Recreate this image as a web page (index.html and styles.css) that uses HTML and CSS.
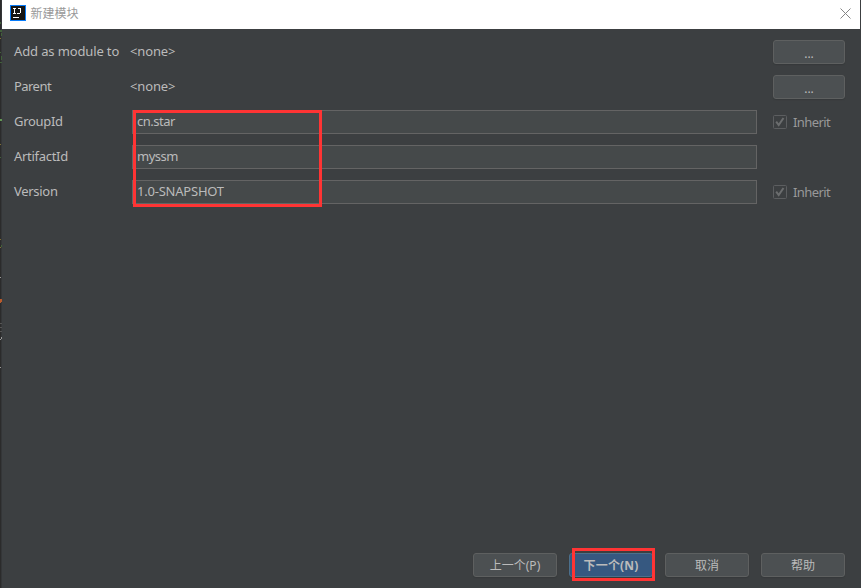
FILE: index.html
```html
<!DOCTYPE html>
<html lang="zh">
<head>
<meta charset="utf-8">
<title>新建模块</title>
<link rel="stylesheet" href="styles.css">
</head>
<body>
<div class="screen">
  <svg class="backdrop" width="2" height="588" viewBox="0 0 2 588" shape-rendering="crispEdges">
    <path fill="#2b2b2b" d="M0 0h1v588H0z"/>
    <path fill="#343638" d="M1 0h1v588H1z"/>
    <path fill="#41603a" d="M0 22h1v2H0zM0 30h2v2H0zM1 33h1v3H1zM0 52h1v1H0zM1 56h1v4H1zM0 62h2v1H0zM0 157h1v1H0zM1 245h1v2H1z"/>
    <path fill="#629755" d="M0 119h2v2H0z"/>
    <path fill="#7d6d35" d="M0 38h1v1H0zM0 144h1v1H0zM0 239h1v1H0zM0 247h1v1H0z"/>
    <path fill="#b95a2b" d="M0 299h2v3H0zM0 302h1v1H0z"/>
    <path fill="#999" d="M0 277h1v1H0zM1 337h1v2H1zM0 339h1v1H0zM0 367h1v1H0z"/>
    <path fill="#555" d="M0 323h2v1H0zM0 327h2v1H0zM0 331h2v1H0z"/>
  </svg>
  <main class="dialog">
    <header class="titlebar">
      <svg class="logo" width="16" height="16" viewBox="0 0 16 16" shape-rendering="crispEdges">
        <path fill="#087cfa" d="M0 0h16v16H0z"/>
        <path fill="#151515" d="M1 1h14v14H1z"/>
        <path fill="#fff" d="M3 3h3v1H3zM4 4h1v4H4zM3 8h3v1H3zM8 3h3v1H8zM10 4h1v4h-1zM7 8h3v1H7zM3 12h6v1H3z"/>
      </svg>
      <h1 class="title">新建模块</h1>
      <svg class="close" width="11" height="11" viewBox="0 0 11 11"><path d="M.5.5l10 10M10.500.5l-10 10" stroke="#858585" fill="none"/></svg>
    </header>
    <section class="form">
      <span class="label wide">Add as module to</span><span class="value">&lt;none&gt;</span><button class="btn more">...</button>
      <span class="label parent">Parent</span><span class="value">&lt;none&gt;</span><button class="btn more">...</button>
      <span class="label">GroupId</span><span class="field">cn.star</span>
      <span class="inherit"><svg width="14" height="14" viewBox="0 0 14 14"><rect x=".5" y=".5" width="13" height="13" rx="1" fill="none" stroke="#5c5e60"/><path d="M3.200 6.700l2.500 3.300 4.800-7" fill="none" stroke="#6b6d6e" stroke-width="2"/></svg>Inherit</span>
      <span class="label">ArtifactId</span><span class="field">myssm</span><span></span>
      <span class="label">Version</span><span class="field snapshot">1.0-SNAPSHOT</span>
      <span class="inherit"><svg width="14" height="14" viewBox="0 0 14 14"><rect x=".5" y=".5" width="13" height="13" rx="1" fill="none" stroke="#5c5e60"/><path d="M3.200 6.700l2.500 3.300 4.800-7" fill="none" stroke="#6b6d6e" stroke-width="2"/></svg>Inherit</span>
      <i class="mark mark-fields"></i>
    </section>
    <footer class="actions">
      <button class="btn">上一个(P)</button>
      <span class="primary-wrap"><button class="btn primary">下一个(N)</button><i class="mark mark-next"></i></span>
      <button class="btn">取消</button>
      <button class="btn">帮助</button>
    </footer>
  </main>
</div>
</body>
</html>
```

FILE: styles.css
```css
* { box-sizing: border-box; }
body { margin: 0; background: #3c3f41; }
.screen {
  display: flex;
  width: 861px;
  height: 588px;
  overflow: hidden;
  font: 13px/24px "Noto Sans", "Noto Sans CJK SC", sans-serif;
  color: #bbb;
}
.backdrop { flex: none; }
.dialog {
  flex: 1;
  display: flex;
  flex-direction: column;
  background: #3c3f41;
}
.titlebar {
  display: flex;
  align-items: center;
  height: 29px;
  margin-right: 1px;
  padding: 0 9px 3px 8px;
  background: #fff;
}
.title {
  flex: 1;
  margin: 0 0 0 4.500px;
  font: 12px/20px "Noto Sans CJK SC", sans-serif;
  color: #999;
}
.form {
  position: relative;
  display: grid;
  grid-template-columns: 118px 625px 88px;
  grid-auto-rows: 24px;
  row-gap: 11px;
  padding: 11px 0 0 12px;
}
.form > * { white-space: nowrap; }
.label { line-height: 23px; letter-spacing: -0.300px; }
.wide { letter-spacing: -0.130px; }
.parent { letter-spacing: -0.550px; }
.value { margin-left: -2px; line-height: 23px; letter-spacing: -0.150px; }
.field {
  padding-left: 4px;
  line-height: 21px;
  letter-spacing: -0.500px;
  background: #45494a;
  border: 1px solid #646464;
}
.snapshot { letter-spacing: -0.220px; }
.form .btn, .inherit { margin-left: 16px; }
.inherit {
  display: flex;
  align-items: center;
  gap: 6px;
  color: #999;
  letter-spacing: -0.600px;
}
.btn {
  display: block;
  width: 84px;
  height: 24px;
  padding: 1px 0 0;
  font: 12px/22px "Noto Sans", "Noto Sans CJK SC", sans-serif;
  color: #bbb;
  background: #4c5052;
  border: 1px solid #5e6060;
  border-radius: 3px;
  box-shadow: 0 1px 1px #36393b;
}
.more { width: 72px; padding-top: 2px; }
.actions {
  display: flex;
  gap: 12px;
  margin-top: auto;
  padding: 0 16px 11px 471px;
}
.primary-wrap { position: relative; }
.primary {
  font-weight: bold;
  letter-spacing: 0.150px;
  background: #365880;
  border-color: #4c708c;
}
.mark {
  position: absolute;
  border: 3px solid #ff3434;
}
.mark-fields { left: 131px; top: 81px; width: 189px; height: 97px; }
.mark-next { left: 3px; top: -5px; width: 83px; height: 33px; }
```
